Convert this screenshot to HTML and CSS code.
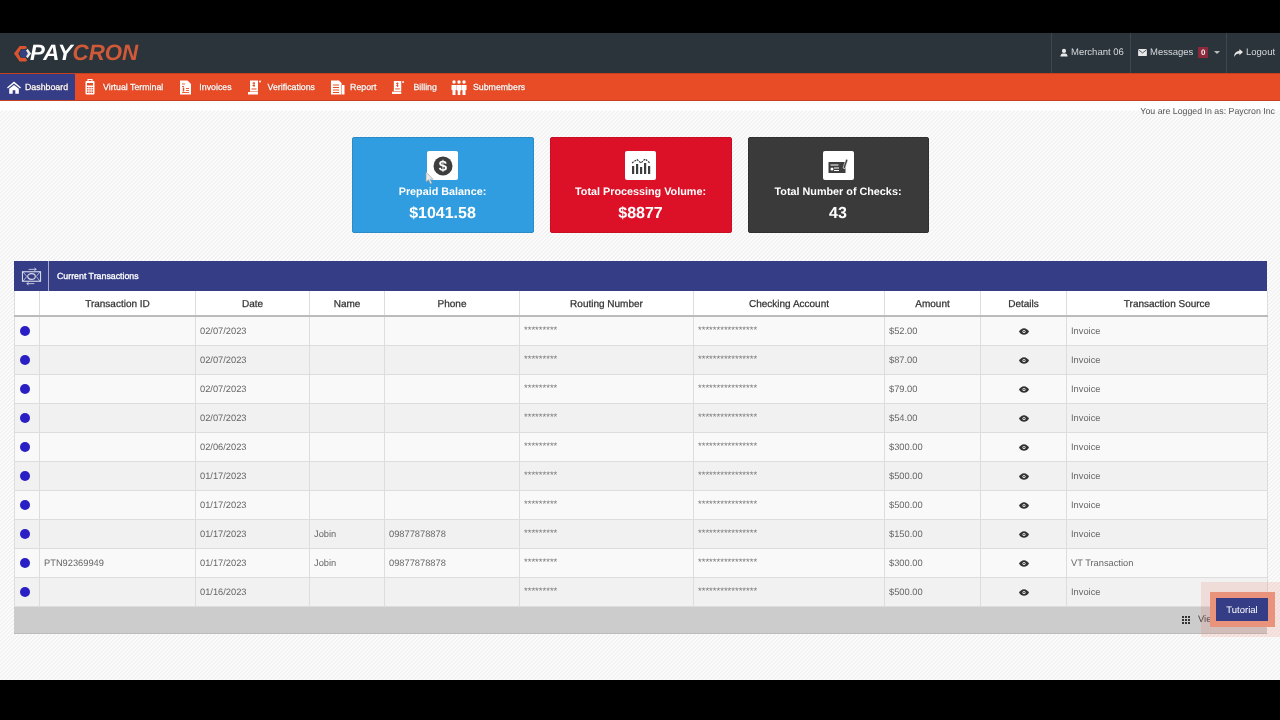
FILE: index.html
```html
<!DOCTYPE html>
<html lang="en">
<head>
<meta charset="utf-8">
<title>Paycron Dashboard</title>
<link rel="stylesheet" href="styles.css">
</head>
<body>
<div class="app">
  <header class="topbar">
    <div class="logo">
      <svg class="logo-mark" viewBox="0 0 20 20" width="19" height="19"><path d="M7 2h6.500l1.500 2.500-3 .8H8.500L5.500 10l2.500 4.500h5l2 2.500-1.500 1.500H7L1 10z" fill="#d9542f"/><circle cx="11.500" cy="10" r="4.400" fill="#34407f"/><path d="M15.500 5l3.500 5-3.500 5-1.800-1.800 2-3.200-2-3.200z" fill="#e6e6e6"/></svg>
      <span class="logo-pay">PAY</span><span class="logo-cron">CRON</span>
    </div>
    <nav class="usermenu">
      <a class="um um-merchant"><svg viewBox="0 0 10 10" width="8" height="9"><circle cx="5" cy="3" r="2.600" fill="#e8e8e8"/><path d="M0.500 10c0-3 2-3.600 4.500-3.600S9.500 7 9.500 10z" fill="#e8e8e8"/></svg>Merchant 06</a>
      <a class="um um-messages"><svg viewBox="0 0 10 8" width="9" height="7"><rect width="10" height="8" rx="1" fill="#e8e8e8"/><path d="M0.500 1l4.500 3.500L9.500 1" fill="none" stroke="#2b343b" stroke-width=".9"/></svg>Messages<span class="badge">0</span><span class="caret"></span></a>
      <a class="um um-logout"><svg viewBox="0 0 10 9" width="9" height="8"><path d="M6 0l4 3.500L6 7V5C3.500 5 1.500 6 0 9c0-4 2-6.500 6-7z" fill="#e8e8e8"/></svg>Logout</a>
    </nav>
  </header>

  <nav class="mainnav">
    <a class="nav-item nav-active"><svg viewBox="0 0 16 14" width="14" height="13"><path d="M8 0L0 7l1 1.200L8 2.300l7 5.900L16 7z" fill="#fff"/><path d="M2.500 8.500L8 4l5.500 4.500V14H9.500v-4h-3v4h-4z" fill="#fff"/></svg>Dashboard</a>
    <a class="nav-item nav-virtual"><svg viewBox="0 0 10 16" width="10" height="16"><rect x=".5" y="2" width="9" height="13.500" rx="1" fill="#fff"/><rect x="3" y=".5" width="4" height="3" fill="none" stroke="#fff"/><rect x="2" y="4" width="6" height="2.500" fill="#e84c26"/><path d="M2 8h1.500v1.300H2zM4.300 8h1.500v1.300H4.300zM6.500 8H8v1.300H6.500zM2 10.300h1.500v1.300H2zM4.300 10.300h1.500v1.300H4.300zM6.500 10.300H8v1.300H6.500zM2 12.600h1.500v1.300H2zM4.300 12.600h1.500v1.300H4.300zM6.500 12.600H8v1.300H6.500z" fill="#e84c26"/></svg>Virtual Terminal</a>
    <a class="nav-item"><svg viewBox="0 0 11 15" width="11" height="15"><path d="M0 .5h7.500L11 4v10.500H0z" fill="#fff"/><path d="M2 4h3M2 6.500h2M6 8.500h3M6 10.500h3M2 12.500h7" stroke="#e84c26" stroke-width=".9"/><path d="M3.500 7.500v4" stroke="#e84c26" stroke-width="1.500"/></svg>Invoices</a>
    <a class="nav-item nav-verif"><svg viewBox="0 0 13 15" width="13" height="15"><path d="M2 .5h8v11H2z" fill="#fff"/><path d="M0 12h10v2.500H0z" fill="#fff"/><circle cx="12" cy="1.500" r="1" fill="#fff"/><path d="M6 2v5M4.500 3.200h2.500M4.500 5.500h2.500M3.500 9h5" stroke="#e84c26"/></svg>Verifications</a>
    <a class="nav-item nav-report"><svg viewBox="0 0 15 15" width="15" height="15"><path d="M1 .5h8l2.500 2.500v11.500H1z" fill="#fff"/><path d="M12 5h2.500v9.500H12z" fill="#fff"/><path d="M3 5h6M3 7.500h6M3 10h6M3 12.500h6" stroke="#e84c26"/></svg>Report</a>
    <a class="nav-item nav-billing"><svg viewBox="0 0 13 15" width="12" height="15"><path d="M2 .5h8v11H2z" fill="#fff"/><path d="M0 12h10v2.500H0z" fill="#fff"/><circle cx="12" cy="1.500" r="1" fill="#fff"/><path d="M6 2v5M4.500 3.200h2.500M4.500 5.500h2.500M3.500 9h5" stroke="#e84c26"/></svg>Billing</a>
    <a class="nav-item nav-sub"><svg viewBox="0 0 16 15" width="16" height="15"><g fill="#fff"><circle cx="3" cy="2" r="1.700"/><circle cx="8" cy="2" r="1.700"/><circle cx="13" cy="2" r="1.700"/><path d="M.5 5h5v5H4.500v5h-3v-5h-1zM5.800 5h4.400v5.500H9.300V15H6.700v-4.500h-.9zM10.500 5h5v5h-1v5h-3v-5h-1z"/></g></svg>Submembers</a>
  </nav>

  <main class="content">
    <p class="logged">You are Logged In as: Paycron Inc</p>

    <section class="cards">
      <div class="card card-blue">
        <span class="tile"><svg viewBox="0 0 20 20" width="20" height="20"><circle cx="10" cy="10" r="9.500" fill="#3d3d3d"/><text x="10" y="15" class="tile-dollar">$</text></svg></span>
        <span class="card-label">Prepaid Balance:</span>
        <span class="card-value">$1041.58</span>
        <svg class="cursor" viewBox="0 0 9 14" width="9" height="14"><path d="M1 1v10l2.500-2.200L5.500 13l1.500-.7-2-4.100h3z" fill="#e8e8e8" stroke="#8a9aa5" stroke-width=".6"/></svg>
      </div>
      <div class="card card-red">
        <span class="tile"><svg viewBox="0 0 20 20" width="20" height="20"><g fill="#3d3d3d"><rect x="1" y="10" width="2.200" height="8"/><rect x="5" y="8" width="2.200" height="10"/><rect x="9" y="11" width="2.200" height="7"/><rect x="13" y="7" width="2.200" height="11"/><rect x="17" y="10" width="2.200" height="8"/></g><path d="M1 7l5-3.500L10 7l4-4 5 4" fill="none" stroke="#3d3d3d" stroke-width="1.200" stroke-dasharray="2 1"/></svg></span>
        <span class="card-label">Total Processing Volume:</span>
        <span class="card-value">$8877</span>
      </div>
      <div class="card card-dark">
        <span class="tile"><svg viewBox="0 0 20 20" width="20" height="20"><rect x="0.500" y="6" width="17" height="11" fill="#3d3d3d"/><path d="M2.500 9h8M6 12h5M6 14.500h5" stroke="#fff" stroke-width="1"/><circle cx="4" cy="13" r="1.500" fill="#fff"/><path d="M15 12l3-9 2 .7-3 9z" fill="#3d3d3d" stroke="#fff" stroke-width=".6"/></svg></span>
        <span class="card-label">Total Number of Checks:</span>
        <span class="card-value">43</span>
      </div>
    </section>

    <section class="panel">
      <div class="panel-head">
        <span class="panel-icon"><svg viewBox="0 0 22 20" width="21" height="19" fill="none" stroke="#d5d8e8"><rect x="1.500" y="5" width="19" height="10" stroke-width="1.200"/><ellipse cx="11" cy="10" rx="4" ry="3" stroke-width="1.200"/><path d="M2 5l4 5-4 5M20 5l-4 5 4 5" stroke-width=".8"/><path d="M8 2.500h8M14 1l2 1.500L14 4M14 17.500H6M8 16l-2 1.500L8 19" stroke-width=".9"/></svg></span>
        <h2 class="panel-title">Current Transactions</h2>
      </div>
      <table class="tx">
        <colgroup>
          <col class="c1"><col class="c2"><col class="c3"><col class="c4"><col class="c5"><col class="c6"><col class="c7"><col class="c8"><col class="c9"><col class="c10">
        </colgroup>
        <thead>
          <tr><th></th><th>Transaction ID</th><th>Date</th><th>Name</th><th>Phone</th><th>Routing Number</th><th>Checking Account</th><th>Amount</th><th>Details</th><th>Transaction Source</th></tr>
        </thead>
        <tbody>
          <tr><td class="dotc"><i class="dot"></i></td><td></td><td>02/07/2023</td><td></td><td></td><td><span class="mask">*********</span></td><td><span class="mask">****************</span></td><td>$52.00</td><td class="eyec"><svg class="eye" viewBox="0 0 12 8" width="10" height="7"><path d="M0 4c1.500-2.500 3.500-4 6-4s4.500 1.500 6 4c-1.500 2.500-3.500 4-6 4S1.500 6.500 0 4z" fill="#333"/><circle cx="6" cy="4" r="1.800" fill="#fff"/><circle cx="6" cy="4" r="1" fill="#333"/></svg></td><td>Invoice</td></tr>
          <tr><td class="dotc"><i class="dot"></i></td><td></td><td>02/07/2023</td><td></td><td></td><td><span class="mask">*********</span></td><td><span class="mask">****************</span></td><td>$87.00</td><td class="eyec"><svg class="eye" viewBox="0 0 12 8" width="10" height="7"><path d="M0 4c1.500-2.500 3.500-4 6-4s4.500 1.500 6 4c-1.500 2.500-3.500 4-6 4S1.500 6.500 0 4z" fill="#333"/><circle cx="6" cy="4" r="1.800" fill="#fff"/><circle cx="6" cy="4" r="1" fill="#333"/></svg></td><td>Invoice</td></tr>
          <tr><td class="dotc"><i class="dot"></i></td><td></td><td>02/07/2023</td><td></td><td></td><td><span class="mask">*********</span></td><td><span class="mask">****************</span></td><td>$79.00</td><td class="eyec"><svg class="eye" viewBox="0 0 12 8" width="10" height="7"><path d="M0 4c1.500-2.500 3.500-4 6-4s4.500 1.500 6 4c-1.500 2.500-3.500 4-6 4S1.500 6.500 0 4z" fill="#333"/><circle cx="6" cy="4" r="1.800" fill="#fff"/><circle cx="6" cy="4" r="1" fill="#333"/></svg></td><td>Invoice</td></tr>
          <tr><td class="dotc"><i class="dot"></i></td><td></td><td>02/07/2023</td><td></td><td></td><td><span class="mask">*********</span></td><td><span class="mask">****************</span></td><td>$54.00</td><td class="eyec"><svg class="eye" viewBox="0 0 12 8" width="10" height="7"><path d="M0 4c1.500-2.500 3.500-4 6-4s4.500 1.500 6 4c-1.500 2.500-3.500 4-6 4S1.500 6.500 0 4z" fill="#333"/><circle cx="6" cy="4" r="1.800" fill="#fff"/><circle cx="6" cy="4" r="1" fill="#333"/></svg></td><td>Invoice</td></tr>
          <tr><td class="dotc"><i class="dot"></i></td><td></td><td>02/06/2023</td><td></td><td></td><td><span class="mask">*********</span></td><td><span class="mask">****************</span></td><td>$300.00</td><td class="eyec"><svg class="eye" viewBox="0 0 12 8" width="10" height="7"><path d="M0 4c1.500-2.500 3.500-4 6-4s4.500 1.500 6 4c-1.500 2.500-3.500 4-6 4S1.500 6.500 0 4z" fill="#333"/><circle cx="6" cy="4" r="1.800" fill="#fff"/><circle cx="6" cy="4" r="1" fill="#333"/></svg></td><td>Invoice</td></tr>
          <tr><td class="dotc"><i class="dot"></i></td><td></td><td>01/17/2023</td><td></td><td></td><td><span class="mask">*********</span></td><td><span class="mask">****************</span></td><td>$500.00</td><td class="eyec"><svg class="eye" viewBox="0 0 12 8" width="10" height="7"><path d="M0 4c1.500-2.500 3.500-4 6-4s4.500 1.500 6 4c-1.500 2.500-3.500 4-6 4S1.500 6.500 0 4z" fill="#333"/><circle cx="6" cy="4" r="1.800" fill="#fff"/><circle cx="6" cy="4" r="1" fill="#333"/></svg></td><td>Invoice</td></tr>
          <tr><td class="dotc"><i class="dot"></i></td><td></td><td>01/17/2023</td><td></td><td></td><td><span class="mask">*********</span></td><td><span class="mask">****************</span></td><td>$500.00</td><td class="eyec"><svg class="eye" viewBox="0 0 12 8" width="10" height="7"><path d="M0 4c1.500-2.500 3.500-4 6-4s4.500 1.500 6 4c-1.500 2.500-3.500 4-6 4S1.500 6.500 0 4z" fill="#333"/><circle cx="6" cy="4" r="1.800" fill="#fff"/><circle cx="6" cy="4" r="1" fill="#333"/></svg></td><td>Invoice</td></tr>
          <tr><td class="dotc"><i class="dot"></i></td><td></td><td>01/17/2023</td><td>Jobin</td><td>09877878878</td><td><span class="mask">*********</span></td><td><span class="mask">****************</span></td><td>$150.00</td><td class="eyec"><svg class="eye" viewBox="0 0 12 8" width="10" height="7"><path d="M0 4c1.500-2.500 3.500-4 6-4s4.500 1.500 6 4c-1.500 2.500-3.500 4-6 4S1.500 6.500 0 4z" fill="#333"/><circle cx="6" cy="4" r="1.800" fill="#fff"/><circle cx="6" cy="4" r="1" fill="#333"/></svg></td><td>Invoice</td></tr>
          <tr><td class="dotc"><i class="dot"></i></td><td>PTN92369949</td><td>01/17/2023</td><td>Jobin</td><td>09877878878</td><td><span class="mask">*********</span></td><td><span class="mask">****************</span></td><td>$300.00</td><td class="eyec"><svg class="eye" viewBox="0 0 12 8" width="10" height="7"><path d="M0 4c1.500-2.500 3.500-4 6-4s4.500 1.500 6 4c-1.500 2.500-3.500 4-6 4S1.500 6.500 0 4z" fill="#333"/><circle cx="6" cy="4" r="1.800" fill="#fff"/><circle cx="6" cy="4" r="1" fill="#333"/></svg></td><td>VT Transaction</td></tr>
          <tr><td class="dotc"><i class="dot"></i></td><td></td><td>01/16/2023</td><td></td><td></td><td><span class="mask">*********</span></td><td><span class="mask">****************</span></td><td>$500.00</td><td class="eyec"><svg class="eye" viewBox="0 0 12 8" width="10" height="7"><path d="M0 4c1.500-2.500 3.500-4 6-4s4.500 1.500 6 4c-1.500 2.500-3.500 4-6 4S1.500 6.500 0 4z" fill="#333"/><circle cx="6" cy="4" r="1.800" fill="#fff"/><circle cx="6" cy="4" r="1" fill="#333"/></svg></td><td>Invoice</td></tr>
        </tbody>
      </table>
      <div class="panel-foot">
        <a class="viewall"><svg viewBox="0 0 8 8" width="8" height="8"><path d="M0 0h2v2H0zM3 0h2v2H3zM6 0h2v2H6zM0 3h2v2H0zM3 3h2v2H3zM6 3h2v2H6zM0 6h2v2H0zM3 6h2v2H3zM6 6h2v2H6z" fill="#333"/></svg>View All</a>
      </div>
    </section>

    <a class="tutorial"><span class="tutorial-ring"><span class="tutorial-btn">Tutorial</span></span></a>
  </main>
</div>
</body>
</html>
```
FILE: styles.css
```css
* { box-sizing: border-box; }
html, body { margin: 0; padding: 0; height: 100%; background: #000; overflow: hidden; }
body { font-family: "Liberation Sans", Arial, sans-serif; text-rendering: geometricPrecision; }
.app { width: 1280px; height: 720px; padding: 33px 0 40px; display: flex; flex-direction: column; filter: blur(.3px); }

.topbar { height: 40px; background: #2b343b; display: flex; justify-content: space-between; align-items: stretch; flex: none; }
.logo { display: flex; align-items: center; padding-left: 13px; font-size: 22.300px; font-weight: 700; font-style: italic; }
.logo-mark { margin-right: -2px; }
.logo-pay { color: #fff; }
.logo-cron { color: #d05a38; }

.usermenu { display: flex; align-items: stretch; }
.um { display: flex; align-items: center; gap: 3px; color: #d6d9db; font-size: 9.500px; border-left: 1px solid #3e474e; padding-bottom: 1px; }
.um-merchant { width: 79px; padding-left: 8px; }
.um-messages { width: 96px; padding-left: 7px; }
.um-logout { width: 54px; padding-left: 7px; }
.badge { background: #8c2a3c; color: #eee; font-size: 8px; font-weight: 700; width: 10px; height: 11px; line-height: 11px; text-align: center; margin-left: 2px; }
.caret { width: 0; height: 0; border: 3px solid transparent; border-top-color: #bbb; border-bottom: 0; margin-left: 3px; }

.mainnav { height: 28px; background: #e84c26; border-top: 1px solid #c9401f; border-bottom: 1px solid #c9401f; display: flex; align-items: stretch; gap: 16px; flex: none; }
.nav-item { display: flex; align-items: center; gap: 8px; color: #fff; font-size: 8.800px; -webkit-text-stroke: .25px #fff; text-shadow: 0 0 1px rgba(90,30,10,.7); }
.nav-active { width: 75px; padding-left: 7px; gap: 4px; background: #343d85; margin-right: -6px; }
.nav-virtual { margin-right: 1px; }
.nav-verif { gap: 7px; margin-right: -1px; }
.nav-report { gap: 5px; }
.nav-billing { gap: 9px; margin-right: -2px; }
.nav-sub { gap: 6px; }

.content { position: relative; flex: 1; padding: 0 13px 0 14px; background-color: #fff; background-image: linear-gradient(to bottom, #fff 9px, rgba(255,255,255,0) 10px), repeating-linear-gradient(135deg, #f2f2f2 0 1.414px, #fcfcfc 1.414px 2.828px); }
.logged { margin: 0 -8px 0 0; padding: 4px 0 0 0; height: 36px; text-align: right; font-size: 8.800px; line-height: 12px; color: #555; }

.cards { display: flex; justify-content: center; gap: 16px; height: 96px; margin-right: 1px; }
.card { position: relative; width: 182px; height: 96px; border-radius: 2px; color: #fff; display: flex; flex-direction: column; align-items: center; padding-top: 13px; }
.card-blue { background: #2f9ddf; border: 1px solid #2a8bc6; }
.card-red { background: #dc1128; border: 1px solid #c90f24; }
.card-dark { background: #3a3a3a; border: 1px solid #303030; width: 181px; }
.tile { width: 31px; height: 29px; background: #fff; border-radius: 2px; display: flex; align-items: center; justify-content: center; }
.tile-dollar { font-size: 15px; font-weight: 700; fill: #fff; text-anchor: middle; }
.card-label { margin-top: 5px; font-size: 10.800px; line-height: 14px; font-weight: 700; }
.card-value { margin-top: 7px; font-size: 16px; line-height: 16px; font-weight: 700; }
.cursor { position: absolute; left: 72px; top: 33px; }

.panel { margin-top: 28px; width: 1253px; border-bottom: 1px solid #bbb; }
.panel-head { height: 30px; background: #343d85; display: flex; align-items: stretch; }
.panel-icon { width: 35px; display: flex; align-items: center; justify-content: center; border-right: 1px solid #a8acc8; }
.panel-title { margin: 0 0 1px 8px; align-self: center; color: #fff; font-size: 8.800px; font-weight: 400; -webkit-text-stroke: .3px #fff; }

.tx { width: 1253px; border-collapse: collapse; table-layout: fixed; font-size: 9.300px; border-right: 1px solid #bbb; border-left: 1px solid #ddd; }
.c1 { width: 25px; } .c2 { width: 156px; } .c3 { width: 114px; } .c4 { width: 75px; } .c5 { width: 135px; }
.c6 { width: 174px; } .c7 { width: 191px; } .c8 { width: 96px; } .c9 { width: 86px; } .c10 { width: 201px; }
.tx th { height: 25px; padding: 2px 0 0; background: #fff; color: #333; font-size: 10px; font-weight: 400; -webkit-text-stroke: .25px #333; text-align: center; border-right: 1px solid #ddd; border-bottom: 2px solid #bbb; }
.tx td { height: 29px; padding: 1px 4px 0; color: #666; border-right: 1px solid #ddd; border-bottom: 1px solid #ddd; white-space: nowrap; }
.tx tbody tr:nth-child(odd) td { background: #f9f9f9; }
.tx tbody tr:nth-child(even) td { background: #f1f1f1; }
.tx td.dotc { padding: 0 0 0 5px; }
.tx td.eyec { text-align: center; padding: 1px 0 0; }
.dot { display: block; width: 10px; height: 10px; border-radius: 50%; background: #2a1fc4; }
.mask { position: relative; top: -1px; font-size: 9.500px; color: #777; }
.eye { display: block; margin: 0 auto; }

.panel-foot { height: 26px; background: #cccccc; display: flex; align-items: center; justify-content: flex-end; padding-right: 36px; }
.viewall { display: flex; align-items: center; gap: 8px; font-size: 9.500px; color: #444; }

.tutorial { position: absolute; right: 0; top: 481px; width: 79px; height: 55px; padding: 10px 5px 10px 9px; background: rgba(233,130,110,.18); display: flex; }
.tutorial-ring { flex: 1; padding: 6px 7px 6px 6px; background: #e9937d; display: flex; }
.tutorial-btn { flex: 1; padding-top: 1px; background: #343d85; display: flex; align-items: center; justify-content: center; color: #fff; font-size: 9.500px; }
```
